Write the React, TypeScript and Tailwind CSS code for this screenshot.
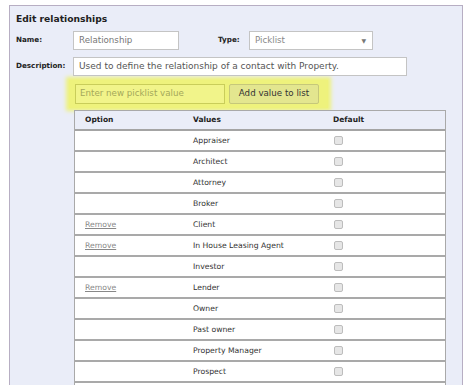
import React from "react";

const rows: { v: string; remove?: boolean }[] = [
  { v: "Appraiser" },
  { v: "Architect" },
  { v: "Attorney" },
  { v: "Broker" },
  { v: "Client", remove: true },
  { v: "In House Leasing Agent", remove: true },
  { v: "Investor" },
  { v: "Lender", remove: true },
  { v: "Owner" },
  { v: "Past owner" },
  { v: "Property Manager" },
  { v: "Prospect" },
  { v: "" },
];

export default function App() {
  return (
    <div
      className="w-[474px] h-[385px] bg-white overflow-hidden pt-[5px] pl-[9px]"
      style={{ fontFamily: '"DejaVu Sans", Verdana, sans-serif' }}
    >
      <div className="w-[454px] h-[420px] border border-[#b7aec3] bg-[#eaedf8] pl-[6px]">
        <div className="h-[25px] flex items-center text-[9.2px] font-bold text-[#222]">
          Edit relationships
        </div>
        <div className="h-[19px] flex items-center">
          <div className="w-[57px] text-[7.2px] font-bold text-[#222]">Name:</div>
          <div className="w-[106px] h-[19px] bg-white border border-[#c4c4c4] flex items-center pl-[5px] text-[8.7px] text-[#777]">
            Relationship
          </div>
          <div className="w-[39px]" />
          <div className="w-[31px] text-[7.2px] font-bold text-[#222]">Type:</div>
          <div className="w-[124px] h-[19px] bg-white border border-[#c4c4c4] flex items-center justify-between pl-[5px] pr-[6px] text-[8.7px] text-[#888]">
            <span>Picklist</span>
            <span className="text-[6px] text-[#777]">▼</span>
          </div>
        </div>
        <div className="h-[19px] mt-[7px] flex items-center">
          <div className="w-[57px] text-[7.2px] font-bold text-[#222]">Description:</div>
          <div className="w-[334px] h-[19px] bg-white border border-[#c4c4c4] flex items-center pl-[5px] text-[9px] text-[#555]">
            Used to define the relationship of a contact with Property.
          </div>
        </div>
        <div className="mt-[4px] ml-[53px] w-[259px] h-[28px] bg-[#eef27c] shadow-[0_0_4px_3px_#eef27c] flex items-center pl-[6px] gap-[4px]">
          <div className="w-[150px] h-[20px] bg-[#f1f48a] border border-[#c9cd5a] flex items-center pl-[4px] text-[8.7px] text-[#a4a85a]">
            Enter new picklist value
          </div>
          <div className="w-[90px] h-[20px] bg-[#e3e68f] border border-[#c6c87a] rounded-[2px] flex items-center justify-center text-[8.7px] text-[#333]">
            Add value to list
          </div>
        </div>
        <div className="ml-[58px] mt-[2px] w-[372px] border-l border-r border-t border-[#a9a9a9] bg-white">
          <div className="h-[20px] bg-[#eaedf8] flex items-center text-[7.5px] font-bold text-[#222] border-b-2 border-[#a4a4a4]">
            <div className="w-[118px] pl-[10px]">Option</div>
            <div className="w-[130px]">Values</div>
            <div className="pl-[10px]">Default</div>
          </div>
          {rows.map((r, i) => (
            <div
              key={i}
              className="h-[21px] flex items-center text-[7.7px] text-[#333] border-b-2 border-[#a9a9a9]"
            >
              <div className="w-[118px] pl-[10px]">
                {r.remove && <span className="underline text-[#888]">Remove</span>}
              </div>
              <div className="w-[130px]">{r.v}</div>
              <div className="pl-[11px] flex items-center">
                <div className="w-[9px] h-[9px] rounded-[2px] border border-[#bdbdbd] bg-[#e6e6e6]" />
              </div>
            </div>
          ))}
        </div>
      </div>
    </div>
  );
}
